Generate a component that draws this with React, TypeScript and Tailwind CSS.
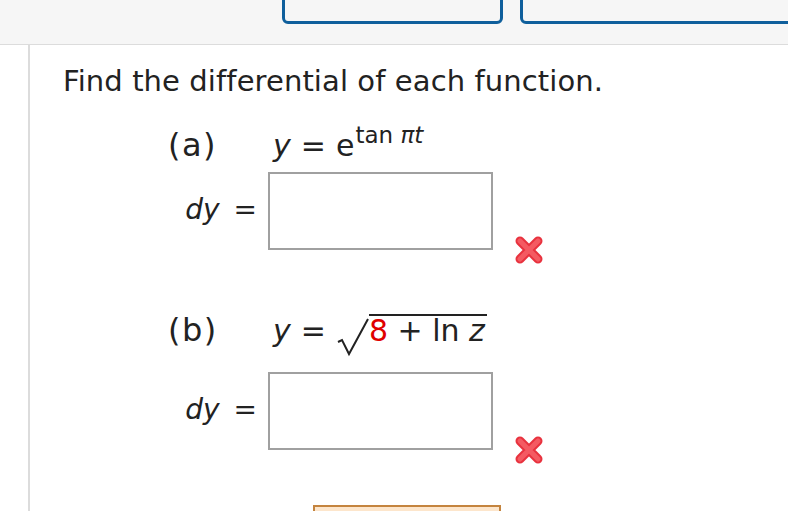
import React from 'react';

const font = { fontFamily: '"DejaVu Sans", Verdana, sans-serif' };

function WrongMark() {
  return (
    <svg width="36" height="36" viewBox="0 0 36 36" className="shrink-0">
      <g strokeLinecap="round">
        <path d="M9 9 L27 27 M27 9 L9 27" stroke="#e8323e" strokeWidth="9" />
        <path d="M9 9 L27 27 M27 9 L9 27" stroke="#f45a62" strokeWidth="5" />
      </g>
    </svg>
  );
}

function Radical() {
  return (
    <svg width="32" height="40" viewBox="0 0 32 40" className="shrink-0 self-end mb-[-6px]">
      <path d="M1 25 L5 23 L12 37 L31 2" fill="none" stroke="#222" strokeWidth="2" strokeLinejoin="miter" />
    </svg>
  );
}

function AnswerRow() {
  return (
    <div className="flex items-start">
      <div className="w-[255px] flex justify-end pt-[18px] text-[28px] leading-[40px] text-[#222]">
        <span className="italic">dy</span>
        <span className="ml-[14px]">=</span>
      </div>
      <div className="ml-[11px] w-[225px] h-[78px] border-2 border-[#a0a0a0] bg-white" />
      <div className="ml-[18px] mt-[60px]">
        <WrongMark />
      </div>
    </div>
  );
}

export default function App() {
  return (
    <div className="w-[788px] h-[511px] overflow-hidden bg-white" style={font}>
      {/* toolbar */}
      <div className="h-[45px] bg-[#f6f6f6] border-b border-[#dcdcdc] flex items-start">
        <div className="shrink-0 ml-[282px] mt-[-10px] w-[221px] h-[34px] border-[3px] border-[#0f5f9c] rounded-[6px] bg-[#f6f6f6]" />
        <div className="shrink-0 ml-[17px] mt-[-10px] w-[300px] h-[34px] border-[3px] border-[#0f5f9c] rounded-[6px] bg-[#f6f6f6]" />
      </div>

      <div className="ml-[28px] border-l-2 border-[#dcdcdc] h-[466px] pl-[33px] text-[#222]">
        <h1 className="pt-[18px] text-[29px] leading-[36px] font-normal tracking-[0.1px]">
          Find the differential of each function.
        </h1>

        <div className="mt-[26px] flex items-baseline text-[30px] leading-[40px]">
          <span className="ml-[105px] w-[105px] text-[32px] tracking-[1.5px]">(a)</span>
          <span className="italic">y</span>
          <span className="mx-[10px]">=</span>
          <span>e</span>
          <span className="relative top-[-13px] text-[23px] ml-[1px]">
            tan <span className="italic">πt</span>
          </span>
        </div>

        <div className="ml-[-61px] mt-[4px]">
          <AnswerRow />
        </div>

        <div className="mt-[42px] flex items-baseline text-[30px] leading-[40px]">
          <span className="ml-[105px] w-[105px] text-[32px] tracking-[1.5px]">(b)</span>
          <span className="italic">y</span>
          <span className="ml-[10px] mr-[11px]">=</span>
          <Radical />
          <span className="border-t-2 border-[#222] leading-[30px] pr-[2px]">
            <span className="text-[#e00000]">8</span> + ln <span className="italic">z</span>
          </span>
        </div>

        <div className="ml-[-61px] mt-[21px]">
          <AnswerRow />
        </div>

        <div className="ml-[250px] mt-[37px] w-[188px] h-[30px] border-2 border-[#c4843f] bg-[#fde6cc]" />
      </div>
    </div>
  );
}
